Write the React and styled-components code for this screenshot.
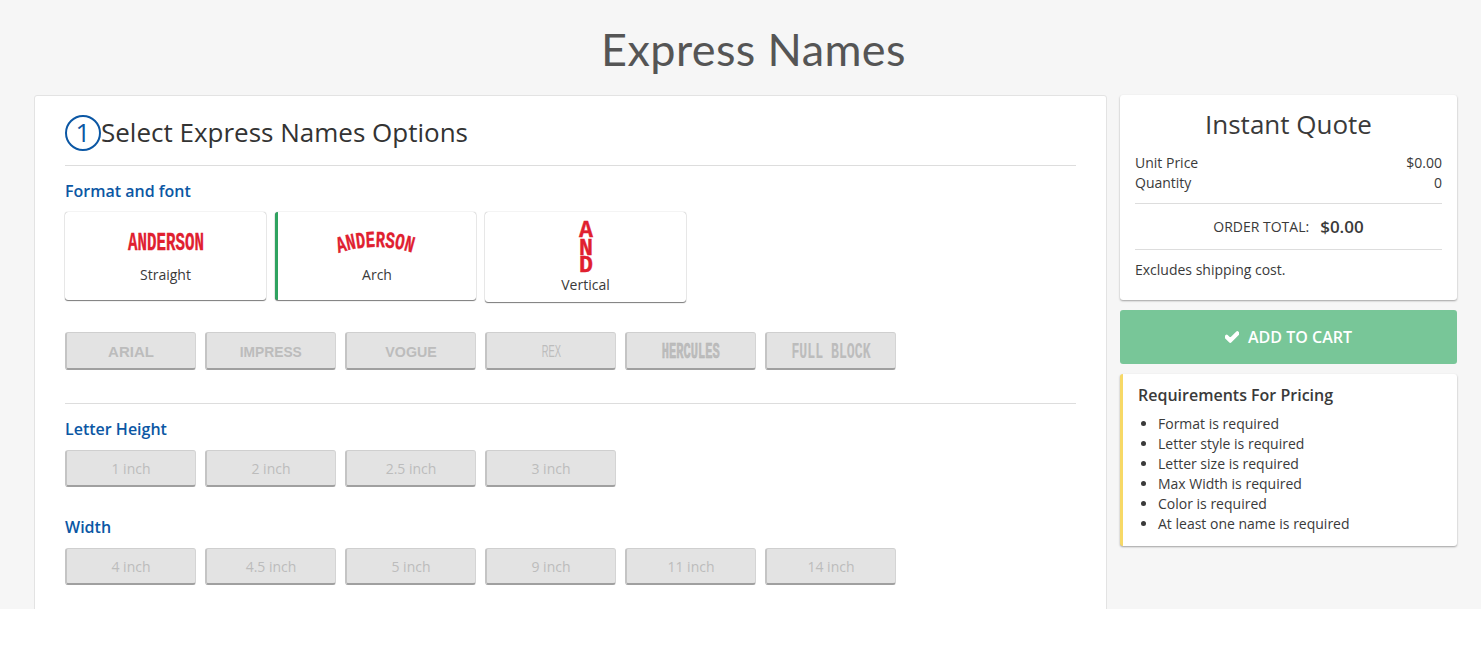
import styled, { createGlobalStyle } from "styled-components";
import { FaCheck } from "react-icons/fa";

const GlobalStyle = createGlobalStyle`
  * { box-sizing: border-box; }
  html, body { margin: 0; background: #fff; }
  body { font-family: "Open Sans", sans-serif; color: #3a3a3a; font-size: 14px; }
`;

const Page = styled.div`
  height: 609px;
  overflow: hidden;
  background: #f6f6f6;
  padding: 0 24px 0 34px;
`;
const PageTitle = styled.h1`
  margin: 0;
  height: 95px;
  padding: 24px 0 0 16px;
  text-align: center;
  font-family: Lato, sans-serif;
  font-weight: 400;
  font-size: 45px;
  line-height: 50px;
  letter-spacing: 0.4px;
  color: #555;
`;
const Columns = styled.div`
  display: flex;
  align-items: flex-start;
  gap: 13px;
`;
const MainPanel = styled.section`
  flex: 1;
  background: #fff;
  border: 1px solid #e3e3e3;
  border-radius: 3px;
  padding: 19px 30px 40px;
`;
const StepHeading = styled.h2`
  display: flex;
  align-items: flex-start;
  margin: 0;
  padding-bottom: 14px;
  border-bottom: 1px solid #ddd;
  font-size: 26px;
  font-weight: 400;
  line-height: 35px;
  color: #333;
`;
const StepNumber = styled.span`
  width: 36px;
  height: 36px;
  border: 2px solid #0b57a4;
  border-radius: 50%;
  color: #0b57a4;
  text-align: center;
  line-height: 31px;
`;
const GroupLabel = styled.h3`
  margin: ${(p) => p.$top}px 0 10px;
  font-size: 16px;
  font-weight: 600;
  line-height: 22px;
  color: #0b57a4;
`;
const OptionRow = styled.div`
  display: flex;
  align-items: flex-start;
  gap: 9px;
`;
const FormatCard = styled.div`
  width: 201px;
  min-height: 88px;
  padding: 8px 0 7px;
  display: flex;
  flex-direction: column;
  align-items: center;
  background: #fff;
  border-radius: 3px;
  border-left: ${(p) => (p.$active ? "3px solid #2fa360" : "0")};
  box-shadow: 0 1px 1px rgba(0, 0, 0, 0.5), 0 0 1px rgba(0, 0, 0, 0.45);
  line-height: 20px;
`;
const FormatArt = styled.svg`
  display: block;
  flex: none;
  margin-left: ${(p) => (p.$active ? "-3px" : "0")};
`;
const ArtText = styled.text`
  font-family: "Liberation Mono", monospace;
  font-weight: 700;
  fill: #e0202f;
  stroke: #e0202f;
  stroke-width: 0.35px;
`;
const FontRow = styled(OptionRow)`
  margin-top: 30px;
  padding-bottom: 33px;
  border-bottom: 1px solid #ddd;
`;
const DisabledButton = styled.div`
  width: 131px;
  height: ${(p) => p.$height || 37}px;
  display: flex;
  align-items: center;
  justify-content: center;
  background: #e3e3e3;
  border-left: 2px solid #c4c4c4;
  border-top: 1px solid #cfcfcf;
  border-right: 1px solid #d4d4d4;
  border-bottom: 2px solid #a0a0a0;
  border-radius: 3px;
  color: #bcbcbc;
  font-size: 14px;
`;
const FontSample = styled.span`
  display: inline-block;
  font-family: ${(p) => p.$family};
  font-weight: ${(p) => p.$weight || 700};
  font-size: ${(p) => p.$size || 16}px;
  transform: translateY(${(p) => p.$shift || 1}px) scaleX(${(p) => p.$scale || 1});
  -webkit-text-stroke: ${(p) => p.$stroke || 0}px #b4b4b4;
  white-space: nowrap;
`;
const Sidebar = styled.aside`
  width: 337px;
  flex: none;
  display: flex;
  flex-direction: column;
  gap: 10px;
`;
const QuoteCard = styled.div`
  height: 205px;
  padding: 9px 15px 0;
  background: #fff;
  border-radius: 3px;
  box-shadow: 0 1px 2px rgba(0, 0, 0, 0.35);
  line-height: 20px;
`;
const QuoteTitle = styled.h2`
  margin: 0 0 9px;
  text-align: center;
  font-size: 26px;
  font-weight: 400;
  line-height: 40px;
`;
const QuoteRow = styled.div`
  display: flex;
  justify-content: space-between;
`;
const TotalRow = styled.div`
  display: flex;
  justify-content: center;
  align-items: center;
  gap: 11px;
  height: 47px;
  margin-top: 10px;
  border-top: 1px solid #ddd;
  border-bottom: 1px solid #ddd;
`;
const TotalAmount = styled.strong`
  font-size: 17px;
  font-weight: 600;
`;
const QuoteNote = styled.p`
  margin: 10px 0 0;
`;
const CartButton = styled.button`
  height: 54px;
  display: flex;
  align-items: center;
  justify-content: center;
  gap: 9px;
  border: 0;
  border-radius: 3px;
  background: #78c698;
  color: #fff;
  font-family: inherit;
  font-size: 16px;
  font-weight: 600;
`;
const CartCheck = styled(FaCheck)`
  stroke: currentColor;
  stroke-width: 50px;
`;
const RequirementsCard = styled.div`
  height: 172px;
  padding: 9px 15px 0 15px;
  background: #fff;
  border-left: 3px solid #f7d967;
  border-radius: 3px;
  box-shadow: 0 1px 2px rgba(0, 0, 0, 0.35);
`;
const RequirementsTitle = styled.h3`
  margin: 0 0 7px;
  font-size: 16px;
  font-weight: 600;
  line-height: 24px;
`;
const RequirementsList = styled.ul`
  margin: 0;
  padding-left: 20px;
  line-height: 20px;
`;

const fontSamples = [
  { name: "ARIAL", family: '"Liberation Sans", sans-serif', size: 15 },
  { name: "IMPRESS", family: '"Liberation Sans", sans-serif', size: 15, scale: 0.92 },
  { name: "VOGUE", family: '"Liberation Sans", sans-serif', size: 15, scale: 0.95 },
  { name: "REX", family: '"Liberation Sans", sans-serif', size: 17, weight: 400, scale: 0.55 },
  { name: "HERCULES", family: '"Liberation Mono", monospace', size: 22, scale: 0.55, stroke: 0.5, shift: 2 },
  { name: "FULL BLOCK", family: '"Liberation Mono", monospace', size: 22, scale: 0.6, shift: 2 },
];
const heights = ["1 inch", "2 inch", "2.5 inch", "3 inch"];
const widths = ["4 inch", "4.5 inch", "5 inch", "9 inch", "11 inch", "14 inch"];
const requirements = [
  "Format is required",
  "Letter style is required",
  "Letter size is required",
  "Max Width is required",
  "Color is required",
  "At least one name is required",
];

const App = () => {
  return (
    <Page>
      <GlobalStyle />
      <PageTitle>Express Names</PageTitle>
      <Columns>
        <MainPanel>
          <StepHeading>
            <StepNumber>1</StepNumber>
            Select Express Names Options
          </StepHeading>

          <GroupLabel $top={14}>Format and font</GroupLabel>
          <OptionRow>
            <FormatCard>
              <FormatArt width="80" height="45" viewBox="0 0 80 45">
                <ArtText x="2" y="30" fontSize="25" textLength="76" lengthAdjust="spacingAndGlyphs">
                  ANDERSON
                </ArtText>
              </FormatArt>
              Straight
            </FormatCard>
            <FormatCard $active>
              <FormatArt $active width="80" height="45" viewBox="0 0 80 45">
                <defs>
                  <path id="arch-line" d="M2.5 33 Q40 21 77.5 33" />
                </defs>
                <ArtText fontSize="23">
                  <textPath href="#arch-line" textLength="75" lengthAdjust="spacingAndGlyphs">
                    ANDERSON
                  </textPath>
                </ArtText>
              </FormatArt>
              Arch
            </FormatCard>
            <FormatCard>
              <FormatArt width="16" height="55" viewBox="0 0 16 55">
                <ArtText x="1" y="17" fontSize="24" textLength="14" lengthAdjust="spacingAndGlyphs">A</ArtText>
                <ArtText x="1" y="34.5" fontSize="24" textLength="14" lengthAdjust="spacingAndGlyphs">N</ArtText>
                <ArtText x="1" y="52" fontSize="24" textLength="14" lengthAdjust="spacingAndGlyphs">D</ArtText>
              </FormatArt>
              Vertical
            </FormatCard>
          </OptionRow>

          <FontRow>
            {fontSamples.map((font) => (
              <DisabledButton key={font.name} $height={38}>
                <FontSample
                  $family={font.family}
                  $size={font.size}
                  $weight={font.weight}
                  $scale={font.scale}
                  $stroke={font.stroke}
                  $shift={font.shift}
                >
                  {font.name}
                </FontSample>
              </DisabledButton>
            ))}
          </FontRow>

          <GroupLabel $top={14}>Letter Height</GroupLabel>
          <OptionRow>
            {heights.map((label) => (
              <DisabledButton key={label}>{label}</DisabledButton>
            ))}
          </OptionRow>

          <GroupLabel $top={29}>Width</GroupLabel>
          <OptionRow>
            {widths.map((label) => (
              <DisabledButton key={label}>{label}</DisabledButton>
            ))}
          </OptionRow>
        </MainPanel>

        <Sidebar>
          <QuoteCard>
            <QuoteTitle>Instant Quote</QuoteTitle>
            <QuoteRow>
              <span>Unit Price</span>
              <span>$0.00</span>
            </QuoteRow>
            <QuoteRow>
              <span>Quantity</span>
              <span>0</span>
            </QuoteRow>
            <TotalRow>
              <span>ORDER TOTAL:</span>
              <TotalAmount>$0.00</TotalAmount>
            </TotalRow>
            <QuoteNote>Excludes shipping cost.</QuoteNote>
          </QuoteCard>
          <CartButton>
            <CartCheck size={14} />
            ADD TO CART
          </CartButton>
          <RequirementsCard>
            <RequirementsTitle>Requirements For Pricing</RequirementsTitle>
            <RequirementsList>
              {requirements.map((item) => (
                <li key={item}>{item}</li>
              ))}
            </RequirementsList>
          </RequirementsCard>
        </Sidebar>
      </Columns>
    </Page>
  );
};

export default App;
